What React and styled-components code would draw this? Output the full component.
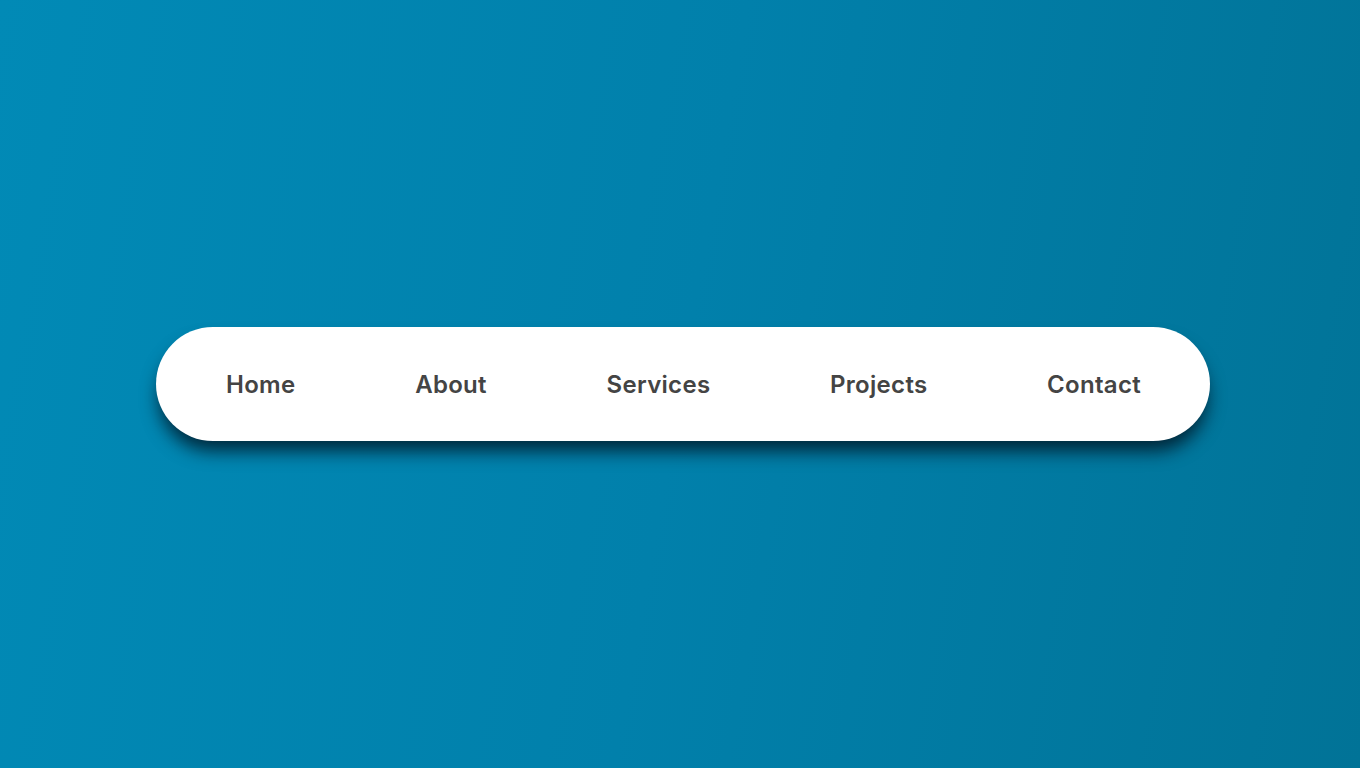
import React from "react"
import styled, { createGlobalStyle } from "styled-components"

const GlobalStyle = createGlobalStyle`
  html, body {
    margin: 0;
    height: 100%;
  }
  body {
    font-family: Inter, "Noto Sans", sans-serif;
    background: linear-gradient(100deg, #018ab6 0%, #0180ab 50%, #017397 100%);
  }
  #root {
    height: 100%;
  }
`

const Page = styled.div`
  height: 100vh;
  display: flex;
  align-items: center;
  justify-content: center;
  padding-left: 6px;
  box-sizing: border-box;
`

const Nav = styled.nav`
  width: 1054px;
  height: 114px;
  box-sizing: border-box;
  padding: 0 69px 0 70px;
  display: flex;
  align-items: center;
  justify-content: space-between;
  background: #fff;
  border-radius: 57px;
  box-shadow: 0 13px 18px -3px rgba(0, 10, 20, 0.75);
`

const NavLink = styled.a`
  font-size: 24px;
  font-weight: 600;
  color: #444;
  text-decoration: none;
  letter-spacing: 0.3px;
  cursor: pointer;
`

const links = ["Home", "About", "Services", "Projects", "Contact"]

const App = () => {
  return (
    <>
      <GlobalStyle />
      <Page>
        <Nav>
          {links.map((l) => (
            <NavLink key={l} href="#">
              {l}
            </NavLink>
          ))}
        </Nav>
      </Page>
    </>
  )
}

export default App
